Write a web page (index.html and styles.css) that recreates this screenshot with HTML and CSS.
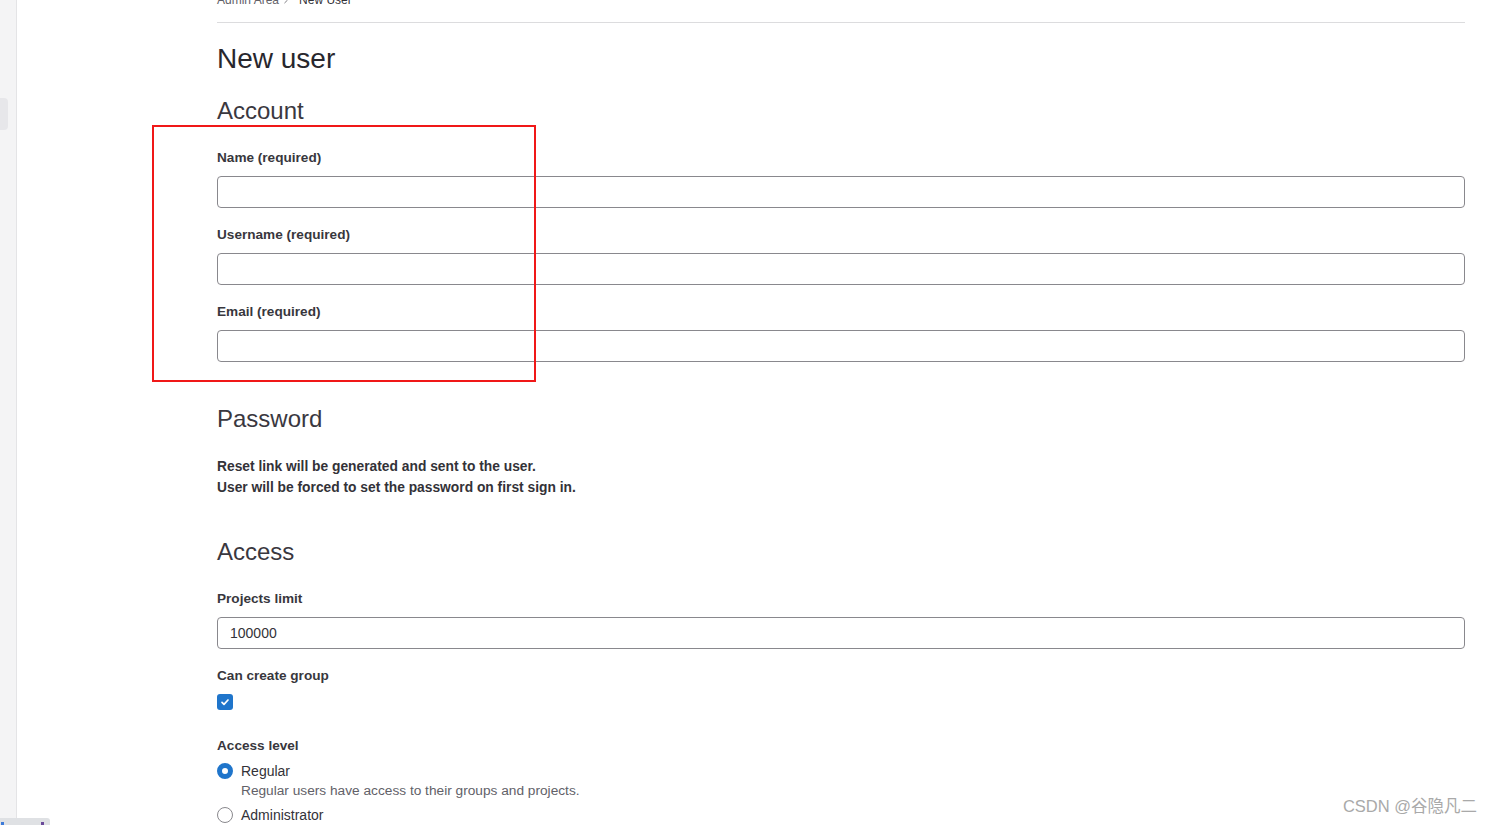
FILE: index.html
```html
<!DOCTYPE html>
<html lang="en">
<head>
  <meta charset="UTF-8">
  <title>New user · Admin Area</title>
  <meta name="viewport" content="width=device-width, initial-scale=1.0">
  <link rel="stylesheet" href="styles.css">
</head>
<body>
  <div class="layout">
    <aside class="sidebar">
      <div class="sidebar-tab"></div>
    </aside>

    <main class="main">
      <nav class="breadcrumbs">
        <span class="crumb">Admin Area</span>
        <svg class="crumb-sep" viewBox="0 0 16 16" width="10" height="10"><path d="M6 3.5l4.5 4.5L6 12.5" fill="none" stroke="#737278" stroke-width="1.5" stroke-linecap="round" stroke-linejoin="round"/></svg>
        <span class="crumb current">New User</span>
      </nav>

      <h1 class="page-title">New user</h1>

      <form class="user-form">
        <section class="form-section">
          <h3 class="section-title">Account</h3>
          <div class="form-group">
            <label class="form-label" for="user_name">Name (required)</label>
            <input class="form-input" type="text" id="user_name">
          </div>
          <div class="form-group">
            <label class="form-label" for="user_username">Username (required)</label>
            <input class="form-input" type="text" id="user_username">
          </div>
          <div class="form-group">
            <label class="form-label" for="user_email">Email (required)</label>
            <input class="form-input" type="email" id="user_email">
          </div>
        </section>

        <section class="form-section">
          <h3 class="section-title">Password</h3>
          <p class="password-note">
            Reset link will be generated and sent to the user.<br>
            User will be forced to set the password on first sign in.
          </p>
        </section>

        <section class="form-section">
          <h3 class="section-title">Access</h3>
          <div class="form-group">
            <label class="form-label" for="projects_limit">Projects limit</label>
            <input class="form-input" type="text" id="projects_limit" value="100000">
          </div>
          <div class="form-group group-check">
            <div class="form-label">Can create group</div>
            <span class="checkbox">
              <svg viewBox="0 0 16 16" width="16" height="16"><path d="M5 8.3l2 2 4-4.3" fill="none" stroke="#fff" stroke-width="1.7" stroke-linecap="round" stroke-linejoin="round"/></svg>
            </span>
          </div>
          <div class="form-group group-radio">
            <div class="form-label">Access level</div>
            <div class="radio-row">
              <span class="radio checked"></span>
              <span class="radio-text">Regular</span>
            </div>
            <div class="radio-help">Regular users have access to their groups and projects.</div>
            <div class="radio-row admin">
              <span class="radio"></span>
              <span class="radio-text">Administrator</span>
            </div>
          </div>
        </section>
      </form>
    </main>
  </div>

  <!-- screenshot annotations -->
  <div class="highlight-box"></div>
  <div class="taskbar-stub"><i class="dot blue"></i><i class="dot purple"></i></div>
  <div class="watermark">CSDN @谷隐凡二</div>
</body>
</html>
```

FILE: styles.css
```css
* {
  box-sizing: border-box;
}
html, body {
  height: 100%;
}
body {
  margin: 0;
  font-family: "Liberation Sans", Arial, sans-serif;
  font-size: 14px;
  color: #333238;
  background: #fff;
  overflow: hidden;
}
.layout {
  display: flex;
  min-height: 100%;
}
.sidebar {
  width: 17px;
  flex-shrink: 0;
  background: #f4f4f5;
  border-right: 1px solid #e4e4e6;
  padding-top: 98px;
}
.sidebar-tab {
  width: 8px;
  height: 32px;
  background: #e7e7ea;
  border-radius: 0 4px 4px 0;
}
.main {
  flex: 1;
  padding: 0 27px 0 200px;
}
.breadcrumbs {
  display: flex;
  align-items: center;
  margin-top: -8px;
  padding-bottom: 14px;
  line-height: 16px;
  font-size: 12px;
  border-bottom: 1px solid #dcdcde;
}
.crumb {
  color: #626168;
}
.crumb.current {
  color: #333238;
}
.crumb-sep {
  margin: 0 8px 0 2px;
}
.page-title {
  margin: 18px 0 0;
  font-size: 28px;
  line-height: 36px;
  font-weight: 400;
  color: #28272d;
}
.section-title {
  margin: 0 0 22px;
  font-size: 24px;
  line-height: 30px;
  font-weight: 400;
  color: #3a383f;
}
.form-section {
  margin-top: 19px;
}
.form-section + .form-section {
  margin-top: 42px;
}
.form-section:last-child {
  margin-top: 39px;
}
.form-group {
  margin-bottom: 17px;
}
.form-label {
  display: block;
  margin-bottom: 8px;
  line-height: 20px;
  font-weight: 700;
  font-size: 13.6px;
  color: #38373d;
}
.form-input {
  display: block;
  width: 100%;
  height: 32px;
  padding: 0 12px;
  border: 1px solid #89888d;
  border-radius: 4px;
  font: inherit;
  color: #333238;
  background: #fff;
}
.password-note {
  margin: 0;
  line-height: 21px;
  font-weight: 700;
  font-size: 13.8px;
}
.group-check {
  margin-bottom: 26px;
}
.checkbox {
  display: flex;
  width: 16px;
  height: 16px;
  border-radius: 3px;
  background: #1f75cb;
}
.group-radio .form-label {
  margin-bottom: 5px;
}
.radio-row {
  display: flex;
  align-items: center;
  gap: 8px;
  line-height: 20px;
}
.radio-row.admin {
  margin-top: 4px;
}
.radio {
  width: 16px;
  height: 16px;
  border-radius: 50%;
  border: 1px solid #89888d;
  background: #fff;
}
.radio.checked {
  border: 5px solid #1f75cb;
}
.radio-help {
  padding-left: 24px;
  line-height: 20px;
  font-size: 13.7px;
  color: #626168;
}
.highlight-box {
  position: absolute;
  left: 152px;
  top: 125px;
  width: 384px;
  height: 257px;
  border: 2px solid #f01818;
}
.taskbar-stub {
  position: absolute;
  left: 0;
  top: 818px;
  width: 50px;
  height: 10px;
  background: #dfe1e4;
  border-radius: 0 3px 0 0;
}
.dot {
  position: absolute;
  top: 4px;
  width: 3px;
  height: 3px;
}
.dot.blue {
  left: 1px;
  background: #3d7bd9;
}
.dot.purple {
  left: 41px;
  background: #6b4a9a;
}
.watermark {
  position: absolute;
  right: 15px;
  top: 795px;
  font-family: "Liberation Sans", "Noto Sans CJK SC", sans-serif;
  font-size: 16.5px;
  line-height: 22px;
  color: #a9a9a9;
}
```
